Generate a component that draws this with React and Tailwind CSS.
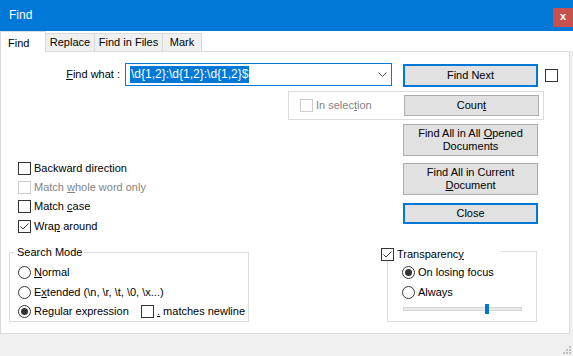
import React from 'react';

const Check = ({ checked = false, disabled = false }) => (
  <span
    className={`flex h-[13px] w-[13px] shrink-0 items-center justify-center border bg-white ${
      disabled ? 'border-[#cccccc]' : 'border-[#333333]'
    }`}
  >
    {checked && (
      <svg width="11" height="11" viewBox="0 0 11 11">
        <polyline points="1.5,5.5 4,8 9.5,2.5" fill="none" stroke="#333" strokeWidth="1" />
      </svg>
    )}
  </span>
);

const Radio = ({ checked = false }) => (
  <span className="flex h-[13px] w-[13px] shrink-0 items-center justify-center rounded-full border border-[#333333] bg-white">
    {checked && <span className="h-[7px] w-[7px] rounded-full bg-[#333333]" />}
  </span>
);

const Btn = ({ children, focused = false, className = '' }) => (
  <div
    className={`flex w-[135px] flex-col items-center justify-center bg-[#e1e1e1] text-center leading-[13px] ${
      focused ? 'border-2 border-[#0078d7]' : 'border border-[#adadad]'
    } ${className}`}
  >
    {children}
  </div>
);

const U = ({ children }) => <span className="underline underline-offset-1">{children}</span>;

const App = () => {
  return (
    <div
      className="flex h-[356px] w-[573px] flex-col overflow-hidden whitespace-nowrap bg-[#f0f0f0] text-[11px] text-black"
      style={{ fontFamily: '"Liberation Sans", Arial, sans-serif' }}
    >
      {/* Title bar */}
      <div className="flex h-[31px] shrink-0 justify-between bg-[#0078d7]">
        <span className="pl-[9px] text-[12px] leading-[31px] text-white">Find</span>
        <div className="mt-[8px] flex h-[19px] w-[20px] items-center justify-center bg-[#c75050] pb-[2px] text-[11px] font-bold text-white">
          x
        </div>
      </div>

      {/* Tabs */}
      <div className="flex h-[20px] shrink-0 items-end bg-white">
        <div className="relative z-10 -mb-px flex h-[21px] w-[46px] border border-b-0 border-[#d9d9d9] bg-white pl-[7px] pt-[3px]">
          Find
        </div>
        <div className="flex h-[18px] w-[49px] items-center justify-center border border-b-0 border-l-0 border-[#d9d9d9] bg-[#f0f0f0]">
          Replace
        </div>
        <div className="flex h-[18px] w-[68px] items-center justify-center border border-b-0 border-l-0 border-[#d9d9d9] bg-[#f0f0f0]">
          Find in Files
        </div>
        <div className="flex h-[18px] w-[39px] items-center justify-center border border-b-0 border-l-0 border-[#d9d9d9] bg-[#f0f0f0]">
          Mark
        </div>
      </div>

      {/* Panel */}
      <div className="flex shrink-0">
        <div className="h-[283px] w-[570px] border border-[#d9d9d9] bg-white">
          {/* Find what row */}
          <div className="mt-[11px] flex items-start">
            <div className="flex h-[23px] w-[119px] items-center justify-end">
              <span>
                <U>F</U>ind what :
              </span>
            </div>
            <div className="ml-[5px] flex h-[23px] w-[267px] items-center border border-[#0078d7] bg-white pl-[4px] pr-[4px]">
              <span className="bg-[#0078d7] px-[1px] text-[12px] leading-[17px] text-white">
                {'\\d{1,2}:\\d{1,2}:\\d{1,2}$'}
              </span>
              <svg className="ml-auto" width="9" height="6" viewBox="0 0 9 6">
                <polyline points="0.5,0.5 4.5,4.5 8.5,0.5" fill="none" stroke="#555" strokeWidth="1" />
              </svg>
            </div>
            <Btn focused className="ml-[11px] mt-px h-[23px]">
              Find Next
            </Btn>
            <div className="ml-[7px] mt-[6px]">
              <Check />
            </div>
          </div>

          <div className="flex">
            {/* Left column */}
            <div className="w-[287px]">
              <div className="mt-[72px] pl-[17px]">
                <div className="flex h-[19px] items-center gap-[3px]">
                  <Check />
                  <span>Backward direction</span>
                </div>
                <div className="flex h-[19px] items-center gap-[3px] text-[#838383]">
                  <Check disabled />
                  <span>
                    Match <U>w</U>hole word only
                  </span>
                </div>
                <div className="flex h-[19px] items-center gap-[3px]">
                  <Check />
                  <span>
                    Match <U>c</U>ase
                  </span>
                </div>
                <div className="flex h-[20px] items-center gap-[3px]">
                  <Check checked />
                  <span>
                    Wra<U>p</U> around
                  </span>
                </div>
              </div>

              {/* Search Mode */}
              <div className="relative ml-[8px] mt-[16px] h-[70px] w-[240px] border border-[#dcdcdc] pl-[8px] pt-[9px]">
                <span className="absolute left-[5px] top-[-8px] bg-white px-[2px] leading-[14px]">Search Mode</span>
                <div className="flex h-[20px] items-center gap-[3px]">
                  <Radio />
                  <span>
                    <U>N</U>ormal
                  </span>
                </div>
                <div className="flex h-[20px] items-center gap-[3px]">
                  <Radio />
                  <span>
                    E<U>x</U>tended (\n, \r, \t, \0, \x...)
                  </span>
                </div>
                <div className="flex h-[19px] items-center gap-[3px]">
                  <Radio checked />
                  <span className="w-[104px] shrink-0">
                    Re<U>g</U>ular expression
                  </span>
                  <Check />
                  <span>
                    <U>.</U> matches newline
                  </span>
                </div>
              </div>
            </div>

            {/* Right column */}
            <div className="flex-1">
              <div className="mt-[4px] flex h-[29px] w-[256px] items-center border border-[#dcdcdc] pl-[11px] pr-[4px]">
                <Check disabled />
                <span className="ml-[3px] text-[#838383]">
                  In selec<U>t</U>ion
                </span>
                <Btn className="ml-auto h-[21px]">
                  <span>
                    Coun<U>t</U>
                  </span>
                </Btn>
              </div>

              <Btn className="ml-[115px] mt-[4px] h-[32px]">
                <span>
                  Find All in All <U>O</U>pened
                </span>
                <span>Documents</span>
              </Btn>
              <Btn className="ml-[115px] mt-[7px] h-[32px]">
                <span>Find All in Current</span>
                <span>
                  <U>D</U>ocument
                </span>
              </Btn>
              <Btn focused className="ml-[115px] mt-[8px] h-[21px]">
                Close
              </Btn>

              {/* Transparency */}
              <div className="relative ml-[99px] mt-[27px] h-[71px] w-[150px] border border-[#dcdcdc] pl-[14px] pt-[10px]">
                <div className="absolute left-[-7px] top-[-4px] flex h-[13px] w-[120px] items-center gap-[3px] bg-white">
                  <Check checked />
                  <span>
                    Transparenc<U>y</U>
                  </span>
                </div>
                <div className="flex h-[20px] items-center gap-[3px]">
                  <Radio checked />
                  <span>On losing focus</span>
                </div>
                <div className="flex h-[20px] items-center gap-[3px]">
                  <Radio />
                  <span>Always</span>
                </div>
                <div className="relative ml-px mt-[5px] h-[4px] w-[119px] border border-[#d6d6d6] bg-[#e7eaea]">
                  <span className="absolute left-[81px] top-[-4px] h-[10px] w-[4px] bg-[#0078d7]" />
                </div>
              </div>
            </div>
          </div>
        </div>
        <div className="flex-1" />
      </div>

      {/* Bottom strip with size grip */}
      <div className="flex flex-1 items-end justify-end pb-[2px] pr-[2px]">
        <svg width="10" height="10" viewBox="0 0 10 10">
          <rect x="8" y="2" width="2" height="2" fill="#bcbcbc" />
          <rect x="5" y="5" width="2" height="2" fill="#bcbcbc" />
          <rect x="8" y="5" width="2" height="2" fill="#bcbcbc" />
          <rect x="2" y="8" width="2" height="2" fill="#bcbcbc" />
          <rect x="5" y="8" width="2" height="2" fill="#bcbcbc" />
          <rect x="8" y="8" width="2" height="2" fill="#bcbcbc" />
        </svg>
      </div>
    </div>
  );
};

export default App;
